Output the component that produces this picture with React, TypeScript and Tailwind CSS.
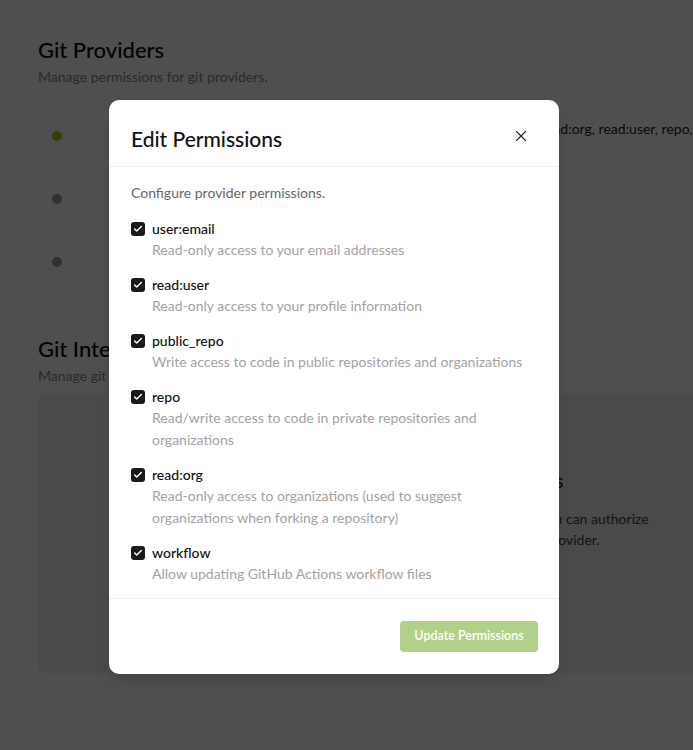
import { X, Check } from 'lucide-react';

const PERMISSIONS = [
  { name: 'user:email', desc: 'Read-only access to your email addresses' },
  { name: 'read:user', desc: 'Read-only access to your profile information' },
  { name: 'public_repo', desc: 'Write access to code in public repositories and organizations' },
  { name: 'repo', desc: 'Read/write access to code in private repositories and organizations' },
  { name: 'read:org', desc: 'Read-only access to organizations (used to suggest organizations when forking a repository)' },
  { name: 'workflow', desc: 'Allow updating GitHub Actions workflow files' },
];

const PROVIDERS = [
  { name: 'GitHub', active: true, scopes: 'user:email, public_repo, read:org, read:user, repo, workflow' },
  { name: 'GitLab', active: false, scopes: '' },
  { name: 'Bitbucket', active: false, scopes: '' },
];

export default function App() {
  return (
    <div className="relative h-[750px] w-[693px] overflow-hidden bg-white" style={{ fontFamily: 'Lato, "Noto Sans", sans-serif' }}>
      {/* page behind the dialog */}
      <div className="w-[1000px] pl-[38px] pt-[36px]">
        <h2 className="text-[22px] leading-[28px] font-medium text-[#0a0a0a]">Git Providers</h2>
        <p className="mt-[3px] text-[14px] leading-[20px] text-[#888]">Manage permissions for git providers.</p>

        <div className="mt-[17px]">
          {PROVIDERS.map((p) => (
            <div key={p.name} className="flex h-[63px] items-center">
              <span className={`ml-[14px] h-[10px] w-[10px] shrink-0 rounded-full ${p.active ? 'bg-[#8fd118]' : 'bg-[#9a9a9a]'}`} />
              <span className="ml-[60px] -mt-[15px] whitespace-nowrap pl-[272px] text-[14px] text-[#222]">{p.scopes}</span>
            </div>
          ))}
        </div>

        <h2 className="mt-[42px] text-[22px] leading-[28px] font-medium text-[#0a0a0a]">Git Integrations</h2>
        <p className="mt-[3px] text-[14px] leading-[20px] text-[#888]">Manage git integrations for your workspace.</p>
        <div className="mt-[7px] flex h-[280px] flex-col items-center rounded-[8px] bg-[#ededed] pr-[98px] pt-[73px]">
          <h3 className="ml-[18px] text-[20px] leading-[28px] font-medium text-[#222]">No Git Integrations</h3>
          <p className="mt-[14px] ml-[8px] text-center text-[14px] leading-[21px] text-[#444]">
            Connect a git provider in settings, then you can authorize
            <br />
            repositories for each connected provider.
          </p>
        </div>
      </div>

      {/* overlay */}
      <div className="absolute inset-0 bg-[rgba(0,0,0,0.69)]" />

      {/* dialog */}
      <div className="absolute left-[109px] top-[100px] w-[450px] rounded-[10px] bg-white shadow-lg">
        <div className="flex h-[67px] items-center justify-between border-b border-[#efefef] pl-[22px] pr-[29px]">
          <h1 className="pt-[11px] text-[21px] font-medium text-[#111]">Edit Permissions</h1>
          <X className="mt-[5px] h-[18px] w-[18px] text-[#222]" strokeWidth={1.5} />
        </div>

        <div className="border-b border-[#efefef] px-[22px] pb-[13px] pt-[16px]">
          <p className="text-[14px] leading-[20px] text-[#666]">Configure provider permissions.</p>
          <div className="mt-[15px] flex flex-col gap-[13px]">
            {PERMISSIONS.map((perm) => (
              <div key={perm.name} className="flex gap-[7px]">
                <span className="mt-[4px] flex h-[14px] w-[14px] shrink-0 items-center justify-center rounded-[3px] bg-[#1a1a1a]">
                  <Check className="h-[10px] w-[10px] text-white" strokeWidth={3.5} />
                </span>
                <div className="min-w-0 flex-1">
                  <div className="text-[14px] leading-[21px] font-medium text-[#111]">{perm.name}</div>
                  <div className="pr-[2px] text-[14px] leading-[22px] text-[#a3a3a3]">{perm.desc}</div>
                </div>
              </div>
            ))}
          </div>
        </div>

        <div className="flex justify-end px-[21px] py-[22px]">
          <button className="h-[31px] w-[138px] rounded-[4px] bg-[#b1d18a] text-[12.5px] font-semibold text-white">
            Update Permissions
          </button>
        </div>
      </div>
    </div>
  );
}
